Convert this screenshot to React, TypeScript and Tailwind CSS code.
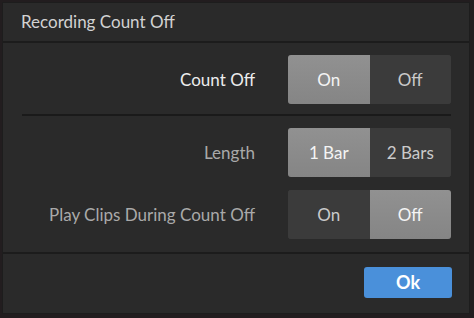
import React, { useState } from 'react';

interface SegmentedProps {
  options: string[];
  value: number;
  onChange: (i: number) => void;
}

const Segmented: React.FC<SegmentedProps> = ({ options, value, onChange }) => (
  <div className="flex h-[49px] w-[163px] rounded-[3px] overflow-hidden bg-[#3b3b3b]">
    {options.map((opt, i) => (
      <button
        key={opt}
        onClick={() => onChange(i)}
        className={
          i === value
            ? 'flex-1 flex items-center justify-center bg-gradient-to-b from-[#919191] to-[#858585] text-[#f4f4f4] text-[17px]'
            : 'flex-1 flex items-center justify-center bg-[#3b3b3b] text-[#cacaca] text-[17px]'
        }
      >
        {opt}
      </button>
    ))}
  </div>
);

const App: React.FC = () => {
  const [countOff, setCountOff] = useState(0);
  const [length, setLength] = useState(0);
  const [playClips, setPlayClips] = useState(1);

  return (
    <div className="w-[474px] h-[318px] bg-[#221d1f] pt-[2px] pl-[2px] pr-[4px] pb-[4px] font-['Lato','Open_Sans',sans-serif]">
      <div className="h-full flex flex-col bg-[#2a2a2a] border border-[#1d1d1d]">
        <div className="h-[40px] flex items-center pl-[18px] border-b-2 border-[#1c1c1c] text-[17px] text-[#d2d2d2]">
          Recording Count Off
        </div>

        <div className="flex-1 flex flex-col pt-[12px] px-[18px]">
          <div className="flex items-center justify-end gap-[33px]">
            <span className="text-[17px] text-[#ededed]">Count Off</span>
            <Segmented options={['On', 'Off']} value={countOff} onChange={setCountOff} />
          </div>

          <div className="h-[2px] bg-[#1a1a1a] mt-[10px] mb-[12px] ml-[1px]" />

          <div className="flex flex-col gap-[13px]">
            <div className="flex items-center justify-end gap-[33px]">
              <span className="text-[17px] text-[#a9a9a9]">Length</span>
              <Segmented options={['1 Bar', '2 Bars']} value={length} onChange={setLength} />
            </div>
            <div className="flex items-center justify-end gap-[33px]">
              <span className="text-[17px] text-[#a9a9a9]">Play Clips During Count Off</span>
              <Segmented options={['On', 'Off']} value={playClips} onChange={setPlayClips} />
            </div>
          </div>
        </div>

        <div className="h-[61px] flex items-center justify-end pr-[17px] pb-[2px] border-t-2 border-[#1c1c1c]">
          <button className="w-[88px] h-[31px] rounded-[3px] bg-[#4a90da] text-white text-[18px] font-bold">
            Ok
          </button>
        </div>
      </div>
    </div>
  );
};

export default App;
